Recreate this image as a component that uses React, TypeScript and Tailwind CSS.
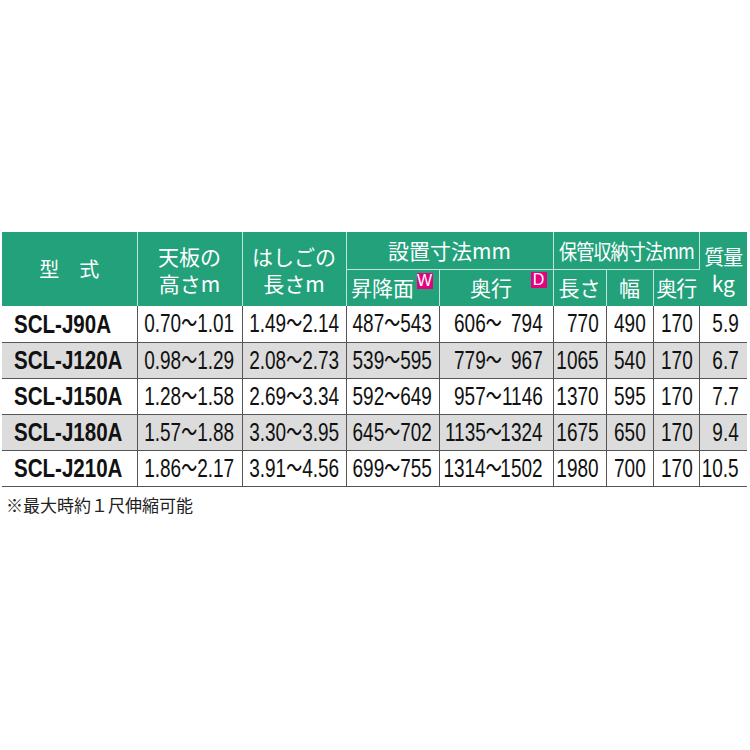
import React from "react";

const rows: string[][] = [
  ["SCL-J90A", "0.70", "1.01", "1.49", "2.14", "487", "543", "606", "794", "770", "490", "170", "5.9"],
  ["SCL-J120A", "0.98", "1.29", "2.08", "2.73", "539", "595", "779", "967", "1065", "540", "170", "6.7"],
  ["SCL-J150A", "1.28", "1.58", "2.69", "3.34", "592", "649", "957", "1146", "1370", "595", "170", "7.7"],
  ["SCL-J180A", "1.57", "1.88", "3.30", "3.95", "645", "702", "1135", "1324", "1675", "650", "170", "9.4"],
  ["SCL-J210A", "1.86", "2.17", "3.91", "4.56", "699", "755", "1314", "1502", "1980", "700", "170", "10.5"],
];

const widths = [135, 105, 104, 93, 114, 53, 47, 46, 48];

function Tilde() {
  return (
    <span className="inline-block text-[21px] leading-none relative top-[-2px] [font-family:'Noto_Sans_CJK_JP',sans-serif] font-medium">
      ～
    </span>
  );
}

const sq = "inline-block shrink-0 whitespace-nowrap scale-x-[0.76]";

function Range({ a, b }: { a: string; b: string }) {
  return (
    <div className="flex justify-center">
      <span className={`${sq} origin-center`}>
        {a}
        <Tilde />
        {b}
      </span>
    </div>
  );
}

function Num({ v, pr }: { v: string; pr: string }) {
  return (
    <div className={`flex justify-end ${pr}`}>
      <span className={`${sq} origin-right`}>{v}</span>
    </div>
  );
}

const hd = "border-r border-[#bfe6d6] last:border-r-0 text-white font-normal text-center align-middle";
const td = "border-r border-b border-[#555] last:border-r-0 align-middle h-[36px] p-0 overflow-hidden whitespace-nowrap";
const badge =
  "absolute right-[6px] w-[16px] h-[16px] bg-[#e4007f] text-white text-[16px] leading-[16px] font-normal [font-family:'Liberation_Sans',sans-serif] flex items-center justify-center";

export default function App() {
  return (
    <div className="w-[750px] h-[750px] bg-white pt-[232px] pl-[2px] [font-family:'Noto_Sans_CJK_JP',sans-serif]">
      <table className="table-fixed border-collapse w-[745px]">
        <colgroup>
          {widths.map((w, i) => (
            <col key={i} style={{ width: w }} />
          ))}
        </colgroup>
        <thead className="bg-[#22a17a]">
          <tr className="h-[37px]">
            <th rowSpan={2} className={`${hd} text-[20px]`}>型　式</th>
            <th rowSpan={2} className={`${hd} text-[21px] leading-[27px] pt-[2px]`}>天板の<br />高さm</th>
            <th rowSpan={2} className={`${hd} text-[21px] leading-[27px] pt-[2px]`}>はしごの<br />長さm</th>
            <th colSpan={2} className={`${hd} border-b text-[21px] leading-none`}>設置寸法mm</th>
            <th colSpan={3} className={`${hd} border-b text-[21px] leading-none whitespace-nowrap`}>
              <div className="flex justify-center">
                <span className="inline-block shrink-0 scale-x-[0.86] whitespace-nowrap tracking-[-1px]">保管収納寸法mm</span>
              </div>
            </th>
            <th rowSpan={2} className={`${hd} text-[20px] leading-[27px] pt-[2px] whitespace-nowrap`}>
              <span className="tracking-[-1px]">質量</span>
              <br />
              <span className="text-[21px]">kg</span>
            </th>
          </tr>
          <tr className="h-[37px]">
            <th className={`${hd} relative text-[21px] leading-none`}>
              <span className="block pr-[20px]">昇降面</span>
              <span className={`${badge} top-[3px]`}>W</span>
            </th>
            <th className={`${hd} relative text-[21px] leading-none`}>
              <span className="block pr-[10px]">奥行</span>
              <span className={`${badge} top-[2px]`}>D</span>
            </th>
            <th className={`${hd} text-[21px] leading-none`}>長さ</th>
            <th className={`${hd} text-[21px] leading-none`}>幅</th>
            <th className={`${hd} text-[21px] leading-none`}>
              <span className="tracking-[-1px]">奥行</span>
            </th>
          </tr>
        </thead>
        <tbody className="text-[25px] text-[#111] [font-family:'Liberation_Sans',sans-serif] leading-none">
          {rows.map((r, i) => (
            <tr key={r[0]} className={i % 2 === 1 ? "bg-[#dcdcdc]" : "bg-white"}>
              <td className={`${td} pl-[12px] font-bold text-[26px] text-[#111]`}>
                <span className="inline-block scale-x-[0.79] origin-left">{r[0]}</span>
              </td>
              <td className={td}><Range a={r[1]} b={r[2]} /></td>
              <td className={td}><Range a={r[3]} b={r[4]} /></td>
              <td className={td}><Range a={r[5]} b={r[6]} /></td>
              <td className={td}>
                <div className="flex items-center">
                  <div className="w-[62px] shrink-0 flex justify-end">
                    <span className={`${sq} origin-right`}>
                      {r[7]}
                      <Tilde />
                    </span>
                  </div>
                  <div className="flex-1 min-w-0 flex justify-end pr-[10px]">
                    <span className={`${sq} origin-right`}>{r[8]}</span>
                  </div>
                </div>
              </td>
              <td className={td}><Num v={r[9]} pr="pr-[7px]" /></td>
              <td className={td}><Num v={r[10]} pr="pr-[7px]" /></td>
              <td className={td}><Num v={r[11]} pr="pr-[6px]" /></td>
              <td className={td}><Num v={r[12]} pr="pr-[8px]" /></td>
            </tr>
          ))}
        </tbody>
      </table>
      <div className="mt-[9px] pl-[4px] text-[17px] text-[#222] leading-none">※最大時約１尺伸縮可能</div>
    </div>
  );
}
